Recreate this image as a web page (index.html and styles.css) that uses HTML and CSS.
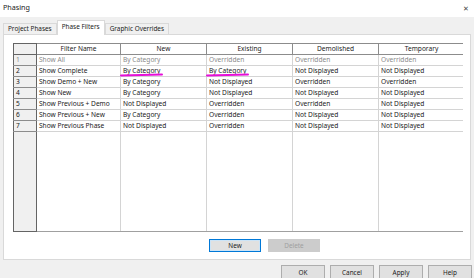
FILE: index.html
```html
<!DOCTYPE html>
<html lang="en">
<head>
    <meta charset="UTF-8">
    <meta name="viewport" content="width=device-width, initial-scale=1.0">
    <title>Phasing</title>
    <link rel="stylesheet" href="styles.css">
</head>
<body>
    <div class="titlebar">
        <span class="title">Phasing</span>
        <span class="close">&#x2715;</span>
    </div>

    <div class="tabs">
        <div class="tab">Project Phases</div>
        <div class="tab active">Phase Filters</div>
        <div class="tab">Graphic Overrides</div>
    </div>

    <div class="panel">
        <div class="grid-wrap">
            <table class="grid">
                <colgroup>
                    <col class="c-num">
                    <col class="c-name">
                    <col class="c-val">
                    <col class="c-val">
                    <col class="c-val">
                    <col class="c-val">
                </colgroup>
                <thead>
                    <tr>
                        <th class="num"></th>
                        <th>Filter Name</th>
                        <th>New</th>
                        <th>Existing</th>
                        <th>Demolished</th>
                        <th>Temporary</th>
                    </tr>
                </thead>
                <tbody>
                    <tr class="locked">
                        <td class="num">1</td>
                        <td>Show All</td>
                        <td>By Category</td>
                        <td>Overridden</td>
                        <td>Overridden</td>
                        <td>Overridden</td>
                    </tr>
                    <tr>
                        <td class="num">2</td>
                        <td>Show Complete</td>
                        <td class="marked">By Category<span class="ink"></span></td>
                        <td class="marked">By Category<span class="ink"></span></td>
                        <td>Not Displayed</td>
                        <td>Not Displayed</td>
                    </tr>
                    <tr>
                        <td class="num">3</td>
                        <td>Show Demo + New</td>
                        <td>By Category</td>
                        <td>Not Displayed</td>
                        <td>Overridden</td>
                        <td>Overridden</td>
                    </tr>
                    <tr>
                        <td class="num">4</td>
                        <td>Show New</td>
                        <td>By Category</td>
                        <td>Not Displayed</td>
                        <td>Not Displayed</td>
                        <td>Not Displayed</td>
                    </tr>
                    <tr>
                        <td class="num">5</td>
                        <td>Show Previous + Demo</td>
                        <td>Not Displayed</td>
                        <td>Overridden</td>
                        <td>Overridden</td>
                        <td>Not Displayed</td>
                    </tr>
                    <tr>
                        <td class="num">6</td>
                        <td>Show Previous + New</td>
                        <td>By Category</td>
                        <td>Overridden</td>
                        <td>Not Displayed</td>
                        <td>Not Displayed</td>
                    </tr>
                    <tr>
                        <td class="num">7</td>
                        <td>Show Previous Phase</td>
                        <td>Not Displayed</td>
                        <td>Overridden</td>
                        <td>Not Displayed</td>
                        <td>Not Displayed</td>
                    </tr>
                    <tr class="filler">
                        <td class="num"></td>
                        <td></td>
                        <td></td>
                        <td></td>
                        <td></td>
                        <td></td>
                    </tr>
                </tbody>
            </table>
        </div>

        <div class="grid-buttons">
            <button class="btn focused">New</button>
            <button class="btn disabled">Delete</button>
        </div>
    </div>

    <div class="dialog-buttons">
        <button class="btn">OK</button>
        <button class="btn">Cancel</button>
        <button class="btn">Apply</button>
        <button class="btn">Help</button>
    </div>
</body>
</html>
```

FILE: styles.css
```css
body {
    margin: 0;
    width: 474px;
    height: 278px;
    overflow: hidden;
    background-color: #f0f0f0;
    font-family: "Noto Sans", "Open Sans", sans-serif;
    font-size: 6.6px;
    color: #1a1a1a;
}
.titlebar {
    height: 17px;
    background-color: #fff;
    display: flex;
    align-items: center;
    justify-content: space-between;
    padding: 0 5px 0 3px;
}
.title {
    font-size: 7.2px;
    margin-top: -3px;
}
.close {
    font-size: 7px;
    color: #444;
}
.tabs {
    display: flex;
    align-items: flex-end;
    height: 15px;
    margin-top: 2px;
    padding-left: 3px;
}
.tab {
    height: 11px;
    line-height: 10px;
    padding: 0 4px;
    border: 1px solid #d9d9d9;
    border-bottom: none;
    background-color: #f0f0f0;
    box-sizing: border-box;
    font-size: 6.4px;
}
.tab.active {
    height: 15px;
    line-height: 11px;
    background-color: #fff;
    margin-bottom: -1px;
    position: relative;
}
.panel {
    margin: 0 3px;
    height: 226px;
    background-color: #fff;
    border: 1px solid #d9d9d9;
    box-sizing: border-box;
    padding: 8px 0 0 9px;
}
.grid-wrap {
    width: 450px;
    height: 189px;
    overflow: hidden;
}
.grid {
    width: 450px;
    height: 189px;
    border-collapse: collapse;
    table-layout: fixed;
}
.c-num {
    width: 23px;
}
.c-name {
    width: 84px;
}
.c-val {
    width: 86px;
}
th, td {
    height: 11px;
    padding: 0 2px;
    line-height: 10px;
    white-space: nowrap;
    overflow: hidden;
    text-align: left;
    font-weight: normal;
    border: 1px solid #d4d4d4;
    box-sizing: border-box;
}
th {
    text-align: center;
    border: 1px solid #8c8c8c;
    background-color: #fff;
}
.num {
    background-color: #f0f0f0;
    border-left: 1px solid #646464;
    border-right: 1px solid #646464;
}
td.num {
    border-bottom: 1px solid #8c8c8c;
}
th.num {
    border-color: #646464;
}
.locked td {
    color: #8a8a8a;
}
.filler td {
    height: auto;
    border-top: none;
    border-bottom: 1px solid #a0a0a0;
}
.filler td.num {
    border-bottom: 1px solid #646464;
}
.marked {
    position: relative;
    overflow: visible;
}
.ink {
    position: absolute;
    left: -1px;
    top: 8px;
    width: 43px;
    height: 2px;
    border-radius: 2px;
    background-color: #e60fd8;
    transform: rotate(-1.5deg);
}
.grid-buttons {
    display: flex;
    gap: 7px;
    margin: 7px 0 0 196px;
}
.btn {
    font-family: "Noto Sans", "Open Sans", sans-serif;
    font-size: 6.4px;
    height: 14px;
    width: 44px;
    padding: 0;
    background-color: #e1e1e1;
    border: 1px solid #adadad;
    color: #1a1a1a;
}
.grid-buttons .btn {
    width: 52px;
    height: 13px;
}
.btn.focused {
    border: 1px solid #0078d7;
    box-shadow: inset 0 0 0 1px #cce4f7;
}
.btn.disabled {
    background-color: #cccccc;
    border-color: #cccccc;
    color: #a0a0a0;
}
.dialog-buttons {
    display: flex;
    justify-content: flex-end;
    gap: 5px;
    margin-top: 5px;
    padding-right: 2px;
}
```
